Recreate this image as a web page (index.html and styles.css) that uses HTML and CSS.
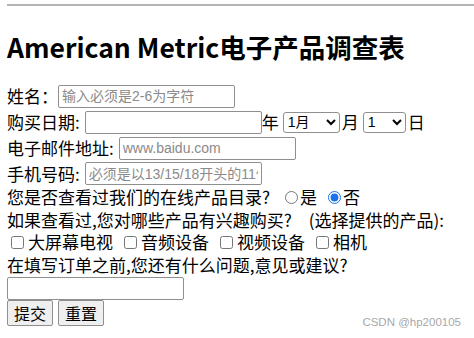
FILE: index.html
```html
<html>
	<head>
		<meta charset="utf-8">
		<link rel="stylesheet" href="styles.css">
	</head>
	<body>
		<hr class="topline">
		<h1>American Metric电子产品调查表</h1>
		<form class="survey">
			<div class="row tall">
				<label class="wide">姓名：</label>
				<input type="text" class="txt name" placeholder="输入必须是2-6为字符">
			</div>
			<div class="row tall">
				<label>购买日期:</label>
				<input type="text" class="txt date">
				<span>年</span>
				<select class="month"><option>1月</option></select>
				<span>月</span>
				<select class="day"><option>1</option></select>
				<span>日</span>
			</div>
			<div class="row tall">
				<label>电子邮件地址:</label>
				<input type="text" class="txt mail" placeholder="www.baidu.com">
			</div>
			<div class="row tall short">
				<label>手机号码:</label>
				<input type="text" class="txt phone" placeholder="必须是以13/15/18开头的11位数字">
			</div>
			<div class="row">
				<span>您是否查看过我们的在线产品目录?</span>
				<label class="opt first"><input type="radio" name="seen">是</label>
				<label class="opt"><input type="radio" name="seen" checked>否</label>
			</div>
			<div class="row">
				<span>如果查看过,您对哪些产品有兴趣购买?</span>
				<span class="hint">(选择提供的产品):</span>
			</div>
			<div class="row checks">
				<label class="opt"><input type="checkbox">大屏幕电视</label>
				<label class="opt"><input type="checkbox">音频设备</label>
				<label class="opt"><input type="checkbox">视频设备</label>
				<label class="opt"><input type="checkbox">相机</label>
			</div>
			<div class="row">
				<span>在填写订单之前,您还有什么问题,意见或建议?</span>
			</div>
			<div class="row noterow">
				<input type="text" class="txt note">
			</div>
			<div class="row buttons">
				<button type="submit">提交</button>
				<button type="reset">重置</button>
			</div>
		</form>
		<div class="mark">CSDN @hp200105</div>
	</body>
</html>
```

FILE: styles.css
```css
body {
	margin: 0;
	padding: 4px 0 0 7px;
	font: 17px "Noto Sans CJK SC", "Liberation Sans", sans-serif;
	color: #000;
	}

.topline {
	margin: 0;
	border: 0;
	border-top: 2px solid #b4b4b4;
	height: 0;
	}

h1 {
	margin: 0;
	padding: 0;
	height: 77px;
	font: bold 26.5px/82px "Noto Sans CJK SC", "Liberation Sans", sans-serif;
	}

.survey {
	margin: 0;
	}

.row {
	display: flex;
	align-items: center;
	height: 22.5px;
	line-height: 20px;
	white-space: nowrap;
	}

.row.tall {
	height: 26px;
	}

.row.short {
	height: 25px;
	}

.noterow {
	height: 24px;
	}

.row label {
	margin-right: 5px;
	}

.row label.wide {
	margin-right: 0;
	}

.hint {
	margin-left: 17px;
	}

.txt {
	box-sizing: border-box;
	height: 23px;
	width: 177px;
	margin: 0;
	padding: 1px 3px;
	border: 1px solid #8f8f8f;
	border-radius: 2px;
	font: 14px "Liberation Sans", "Noto Sans CJK SC", sans-serif;
	}

.txt::placeholder {
	color: #8a8a8a;
	}

select {
	box-sizing: border-box;
	height: 21px;
	margin: 0 2px 0 4px;
	border: 1px solid #8f8f8f;
	border-radius: 3px;
	font: 14px "Liberation Sans", "Noto Sans CJK SC", sans-serif;
	background: #fff;
	}

.month {
	width: 57px;
	}

.day {
	width: 43px;
	}

.row .opt {
	display: flex;
	align-items: center;
	margin-right: 7px;
	}

.opt input {
	margin: 0 4px 0 4px;
	}

.opt.first input {
	margin-left: 15px;
	}

input[type=radio] {
	width: 13px;
	height: 13px;
	accent-color: #1a73e8;
	}

.opt input[type=radio] {
	margin-right: 2px;
	}

input[type=checkbox] {
	width: 13px;
	height: 13px;
	}

.buttons {
	height: 27px;
	align-items: flex-start;
	}

button {
	box-sizing: border-box;
	height: 26px;
	margin: 0 5px 0 0;
	padding: 0 6px;
	border: 1px solid #8f8f8f;
	border-radius: 2px;
	background: #efefef;
	font: 16px/20px "Noto Sans CJK SC", sans-serif;
	}

.mark {
	position: absolute;
	right: 13px;
	top: 316px;
	font: 11.5px "Liberation Sans", sans-serif;
	color: #a8a8a8;
	}
```
